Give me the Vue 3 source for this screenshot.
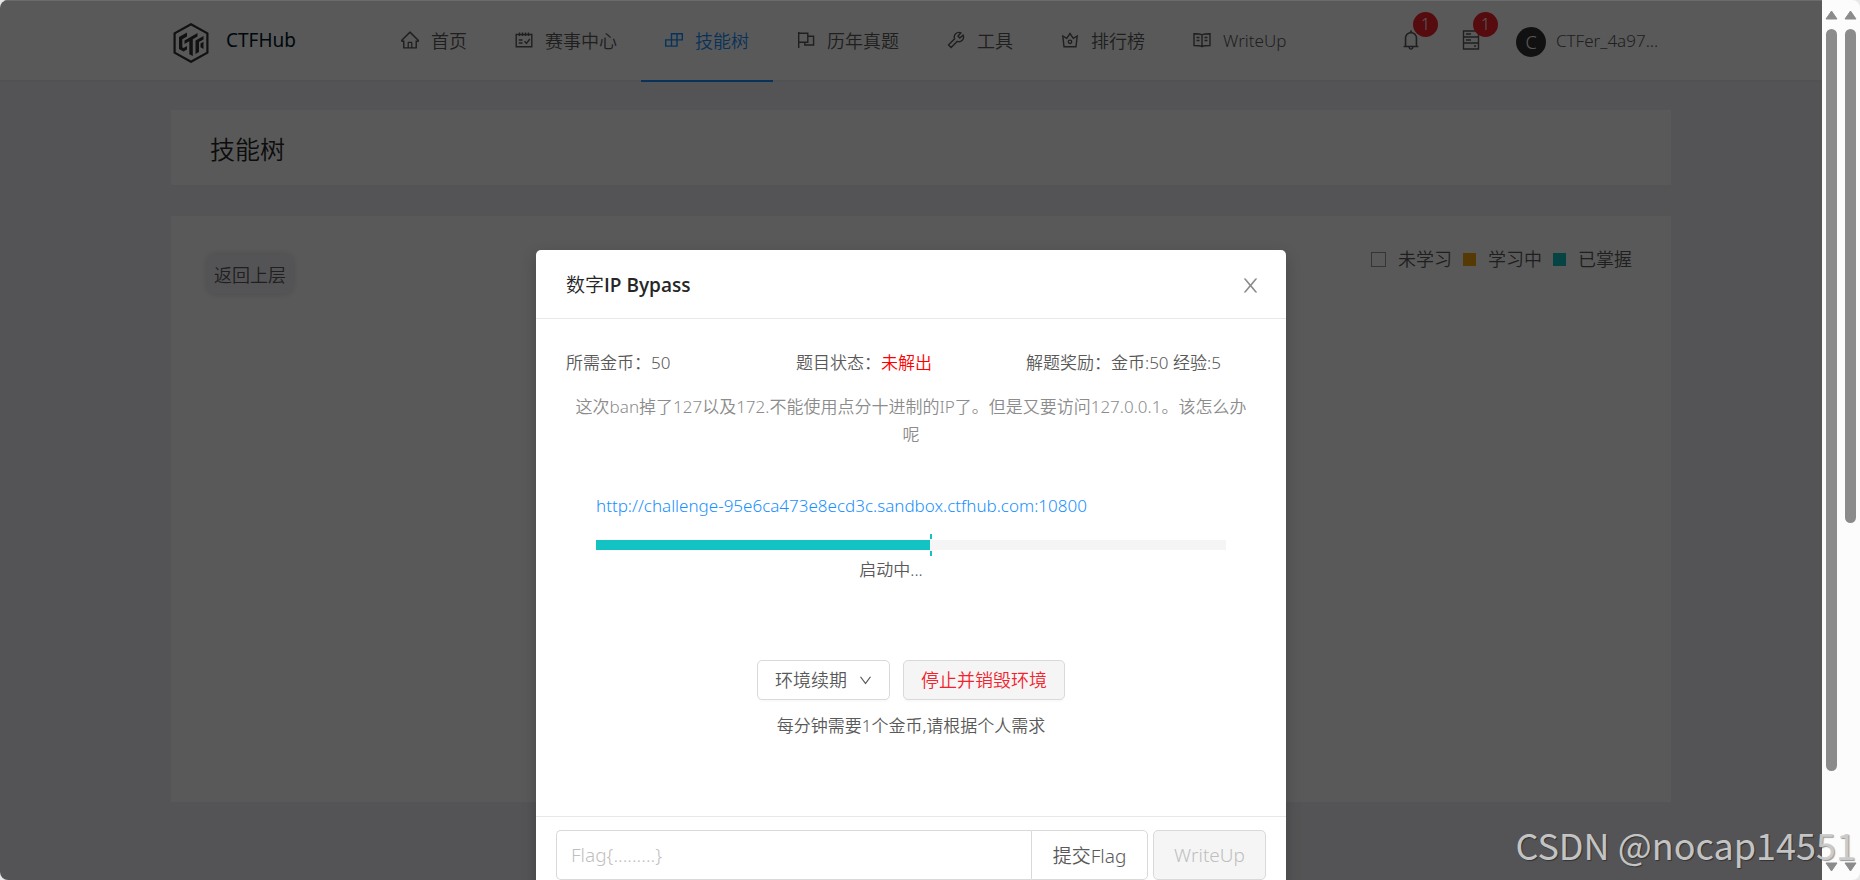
<script setup>
import { ref } from 'vue'

const nav = [
  { id: 'home', label: '首页' },
  { id: 'event', label: '赛事中心' },
  { id: 'skill', label: '技能树', active: true },
  { id: 'flag', label: '历年真题' },
  { id: 'tool', label: '工具' },
  { id: 'crown', label: '排行榜' },
  { id: 'book', label: 'WriteUp' },
]
const legend = [
  { id: 'todo', label: '未学习' },
  { id: 'doing', label: '学习中' },
  { id: 'done', label: '已掌握' },
]
const progress = 53
const flag = ref('')
</script>

<template>
  <div class="screen">
    <div class="page">
      <header class="topbar">
        <div class="container bar">
          <a class="brand" href="#">
            <svg class="logo" viewBox="0 0 36 40" aria-hidden="true">
              <path d="M18 1.2 34.4 10.4V29.6L18 38.8 1.6 29.6V10.4Z" fill="none" stroke="#333" stroke-width="2.2" />
              <path d="M14 9.5 6 14V26L10.5 28.5 14 26.5V23L10.5 25 9.3 24.2V16.2L14 13.4Z" fill="#333" />
              <path d="M11.5 17.5 24.5 10V13.5L19.8 16.2V33L16.3 31.2V18.2L11.5 21Z" fill="#333" />
              <path d="M22.5 17.5 30.5 13V16.5L26 19V29L22.5 31Z" fill="#333" />
              <path d="M27.5 20.5 30.5 18.8V26L27.5 24.2Z" fill="#333" />
            </svg>
            <span>CTFHub</span>
          </a>
          <nav class="menu">
            <a v-for="n in nav" :key="n.id" href="#" class="item" :class="{ active: n.active }">
              <svg v-if="n.id === 'home'" class="ico" viewBox="64 64 896 896" fill="currentColor"><path d="M946.5 505L560.1 118.8l-25.9-25.9a31.5 31.5 0 0 0-44.4 0L77.5 505a63.9 63.9 0 0 0-18.8 46c.4 35.2 29.7 63.3 64.9 63.3h42.5V940h691.8V614.3h43.4c17.1 0 33.2-6.7 45.3-18.8a63.6 63.6 0 0 0 18.7-45.3c0-17-6.7-33.1-18.8-45.2zM568 868H456V664h112v204zm217.9-325.7V868H632V640c0-22.1-17.9-40-40-40H432c-22.1 0-40 17.9-40 40v228H238.1V542.3h-96l370-369.7 23.1 23.1L882 542.3h-96.1z" /></svg>
              <svg v-else class="ico line" viewBox="0 0 18 18">
                <path v-if="n.id === 'event'" d="M1.2 3.5H16.8V15.8H1.2ZM4.5 1.5V5M7.5 1.5V5M10.5 1.5V5M13.5 1.5V5M3.8 9H7.5M3.8 12H7.5M9.5 10.2 11.5 12.5 14.8 8" />
                <path v-if="n.id === 'skill'" d="M6.5 2.7H17.3V8.9H6.5ZM.7 8.9H12V15.1H.7ZM12 2.7V8.9M6.5 8.9V15.1" />
                <path v-if="n.id === 'flag'" d="M1.7 1V17M1.7 2.2H10.8V11.2H1.7M10.8 5.2H16.6V14H7.8V11.2" />
                <path v-if="n.id === 'tool'" d="M11 5.2 13.8 1.9A4.6 4.6 0 0 0 7.6 7.8L1.5 13.9 4.1 16.5 10.2 10.4A4.6 4.6 0 0 0 16.1 4.2L12.8 7Z" />
                <template v-if="n.id === 'crown'"><path d="M1.8 5 3 15.8H15L16.2 5 12.3 7.4 9 2.5 5.7 7.4Z" /><circle cx="9" cy="10.8" r="1.7" /></template>
                <path v-if="n.id === 'book'" d="M9 4C7 2.8 4.5 2.8 1 2.8V14.5C4.5 14.5 7 14.5 9 15.7 11 14.5 13.5 14.5 17 14.5V2.8C13.5 2.8 11 2.8 9 4ZM9 4V15.7M3.5 6.5H6.5M3.5 9.5H6.5M11.5 6.5H14.5M11.5 9.5H14.5" />
              </svg>
              <span>{{ n.label }}</span>
            </a>
          </nav>
          <div class="user">
            <button class="notice" aria-label="消息">
              <svg viewBox="64 64 896 896" fill="currentColor"><path d="M816 768h-24V428c0-141.1-104.3-257.8-240-277.2V112c0-22.1-17.9-40-40-40s-40 17.9-40 40v38.8C336.3 170.2 232 286.9 232 428v340h-24c-17.7 0-32 14.3-32 32v32c0 4.4 3.6 8 8 8h216c0 61.8 50.2 112 112 112s112-50.2 112-112h216c4.4 0 8-3.6 8-8v-32c0-17.7-14.3-32-32-32zM512 888c-26.5 0-48-21.5-48-48h96c0 26.5-21.5 48-48 48zM304 768V428c0-55.6 21.6-107.8 60.9-147.1S456.4 220 512 220c55.6 0 107.8 21.6 147.1 60.9S720 372.4 720 428v340H304z" /></svg>
              <span class="badge">1</span>
            </button>
            <button class="notice" aria-label="环境">
              <svg viewBox="0 0 20 20" class="line"><path d="M2.5 1H17.5V19H2.5ZM2.5 7H17.5M2.5 13H17.5M5 4H10M5 10H10M13 16H15" /></svg>
              <span class="badge">1</span>
            </button>
            <a class="account" href="#"><span class="avatar">C</span><span>CTFer_4a97...</span></a>
          </div>
        </div>
      </header>

      <main class="container">
        <section class="card heading"><h1>技能树</h1></section>
        <section class="card tree">
          <button class="back">返回上层</button>
          <ul class="legend">
            <li v-for="l in legend" :key="l.id"><i :class="l.id"></i>{{ l.label }}</li>
          </ul>
        </section>
      </main>

      <div class="mask">
        <div class="modal" role="dialog" aria-labelledby="dialog-title">
          <div class="modal-head">
            <h2 id="dialog-title"><span>数字</span>IP Bypass</h2>
            <button class="close" aria-label="关闭">
              <svg viewBox="64 64 896 896" fill="currentColor"><path d="M563.8 512l262.5-312.9c4.4-5.2.7-13.1-6.1-13.1h-79.8c-4.7 0-9.2 2.1-12.3 5.7L511.6 449.8 295.1 191.7c-3-3.6-7.5-5.7-12.3-5.7H203c-6.8 0-10.5 7.9-6.1 13.1L459.4 512 196.9 824.9A7.95 7.95 0 0 0 203 838h79.8c4.7 0 9.2-2.1 12.3-5.7l216.5-258.1 216.5 258.1c3 3.6 7.5 5.7 12.3 5.7h79.8c6.8 0 10.5-7.9 6.1-13.1L563.8 512z" /></svg>
            </button>
          </div>
          <div class="modal-body">
            <div class="facts">
              <span>所需金币：50</span>
              <span>题目状态：<b>未解出</b></span>
              <span>解题奖励：金币:50 经验:5</span>
            </div>
            <p class="desc">这次ban掉了127以及172.不能使用点分十进制的IP了。但是又要访问127.0.0.1。该怎么办呢</p>
            <div class="env">
              <a class="url" href="#">http://challenge-95e6ca473e8ecd3c.sandbox.ctfhub.com:10800</a>
              <div class="track" role="progressbar" :aria-valuenow="progress" aria-label="启动进度">
                <div class="fill" :style="{ width: progress + '%' }"></div>
              </div>
              <p class="state">启动中...</p>
            </div>
            <div class="actions">
              <button class="btn">
                环境续期
                <svg viewBox="64 64 896 896" fill="currentColor"><path d="M884 256h-75c-5.1 0-9.9 2.5-12.9 6.6L512 654.2 227.9 262.6c-3-4.1-7.8-6.6-12.9-6.6h-75c-6.5 0-10.3 7.4-6.5 12.7l352.6 486.1c12.8 17.6 39 17.6 51.7 0l352.6-486.1c3.9-5.3.1-12.7-6.4-12.7z" /></svg>
              </button>
              <button class="btn danger">停止并销毁环境</button>
            </div>
            <p class="hint">每分钟需要1个金币,请根据个人需求</p>
          </div>
          <div class="modal-foot">
            <input v-model="flag" type="text" placeholder="Flag{.........}" aria-label="Flag" />
            <button class="submit">提交Flag</button>
            <button class="writeup" disabled>WriteUp</button>
          </div>
        </div>
      </div>
    </div>

    <div v-for="s in ['inner', 'outer']" :key="s" class="scroll" :class="s">
      <svg viewBox="0 0 13 10"><path d="M6.5 1 12 9H1Z" /></svg>
      <div class="rail"><div class="thumb"></div></div>
      <svg viewBox="0 0 13 10"><path d="M6.5 9 12 1H1Z" /></svg>
    </div>
    <div class="watermark">CSDN @nocap14551</div>
  </div>
</template>

<style>
body {
  background: #e8e8e8;
}
</style>

<style scoped>
* {
  box-sizing: border-box;
}
.screen {
  position: relative;
  display: flex;
  height: 100vh;
  overflow: hidden;
  border-radius: 8px;
  background: #fcfcfc;
  font-family: "Noto Sans", "Noto Sans CJK SC", sans-serif;
  font-size: 17px;
  font-weight: 350;
  color: #595959;
}
button,
input {
  margin: 0;
  padding: 0;
  border: 0;
  background: none;
  font: inherit;
  color: inherit;
}
a {
  color: inherit;
  text-decoration: none;
}
h1,
h2,
p,
ul {
  margin: 0;
  padding: 0;
  font-weight: inherit;
}
.page {
  position: relative;
  flex: 1;
  overflow: hidden;
  background: #f0f0f5;
}
.container {
  margin: 0 151px 0 171px;
}
.topbar {
  background: #fff;
  border-bottom: 2px solid #e8ecf0;
}
.bar {
  display: flex;
  height: 80px;
}
.brand {
  display: flex;
  align-items: center;
  gap: 17px;
  width: 206px;
  padding-left: 2px;
  font-size: 19px;
  font-weight: 400;
  color: #001529;
}
.logo {
  width: 36px;
  height: 40px;
  margin-top: 6px;
}
.menu {
  display: flex;
  flex: 1;
}
.item {
  display: flex;
  align-items: center;
  gap: 12px;
  height: 82px;
  padding: 0 24px;
  border-bottom: 2px solid transparent;
  font-size: 18px;
  white-space: nowrap;
}
.item:last-child {
  font-size: 17px;
}
.item.active {
  color: #1890ff;
  border-color: #1890ff;
}
.ico {
  width: 18px;
  height: 18px;
}
.line {
  fill: none;
  stroke: currentColor;
  stroke-width: 1.4;
}
.user {
  display: flex;
  align-items: center;
  width: 270px;
  gap: 40px;
}
.notice {
  position: relative;
  width: 20px;
  height: 20px;
}
.notice svg {
  display: block;
  width: 20px;
  height: 20px;
}
.badge {
  position: absolute;
  left: 12px;
  top: -18px;
  width: 25px;
  height: 25px;
  border-radius: 50%;
  background: #f5222d;
  color: #fff;
  font-size: 16px;
  line-height: 25px;
  text-align: center;
}
.account {
  display: flex;
  align-items: center;
  gap: 10px;
  margin-left: -5px;
}
.avatar {
  width: 30px;
  height: 30px;
  margin-top: 4px;
  border-radius: 50%;
  background: #333;
  color: #fff;
  font-size: 18px;
  line-height: 30px;
  text-align: center;
}
.card {
  background: #fff;
}
.heading {
  margin-top: 28px;
  padding: 3px 39px 0;
}
h1 {
  font-size: 25px;
  line-height: 72px;
  color: #262626;
}
.tree {
  display: flex;
  justify-content: space-between;
  align-items: flex-start;
  height: 586px;
  margin-top: 31px;
  padding: 30px 39px 0 36px;
  font-size: 18px;
}
.back {
  height: 40px;
  margin-top: 8px;
  padding: 0 7px;
  border-radius: 8px;
  background: #f0f0f5;
  box-shadow: 0 0 6px #d8d8dc;
}
.legend {
  display: flex;
  gap: 11px;
  list-style: none;
  line-height: 26px;
}
.legend li {
  display: flex;
  align-items: center;
  gap: 12px;
}
.legend i {
  width: 13px;
  height: 13px;
}
.legend .todo {
  width: 15px;
  height: 15px;
  border: 1px solid #999;
}
.legend .doing {
  background: #f5a60f;
}
.legend .done {
  background: #13c2c2;
}
.mask {
  position: absolute;
  inset: 0;
  display: flex;
  justify-content: center;
  align-items: flex-start;
  padding-top: 249px;
  background: rgba(0, 0, 0, 0.65);
  border-top: 1px solid #6c6c6c;
}
.modal {
  width: 750px;
  border-radius: 5px;
  background: #fff;
  box-shadow: 0 5px 15px rgba(0, 0, 0, 0.2);
}
.modal-head {
  display: flex;
  justify-content: space-between;
  align-items: center;
  height: 69px;
  padding: 2px 26px 0 30px;
  border-bottom: 1px solid #e8e8e8;
}
h2 {
  font-family: "Open Sans", "Noto Sans CJK SC", sans-serif;
  font-size: 19px;
  font-weight: 600;
  color: #262626;
  line-height: 30px;
}
h2 span {
  font-weight: 350;
}
.close {
  width: 19px;
  height: 19px;
  color: #8c8c8c;
}
.close svg {
  display: block;
  width: 19px;
}
.modal-body {
  height: 497px;
  padding: 30px;
  line-height: 28px;
}
.facts {
  display: grid;
  grid-template-columns: repeat(3, 1fr);
}
.facts b {
  font-weight: inherit;
  color: #f00;
}
.desc {
  margin-top: 16px;
  padding: 0 4px;
  text-align: center;
  color: #8c8c8c;
}
.env {
  padding: 43px 30px 0;
}
.url {
  display: block;
  color: #1890ff;
}
.track {
  height: 10px;
  margin-top: 20px;
  background: #f5f5f5;
}
.fill {
  position: relative;
  height: 10px;
  background: #13c2c2;
}
.fill::before,
.fill::after {
  content: "";
  position: absolute;
  right: -2px;
  width: 2px;
  height: 5px;
  background: #13c2c2;
}
.fill::before {
  top: -6px;
}
.fill::after {
  bottom: -6px;
}
.state {
  margin-top: 6px;
  padding-right: 40px;
  text-align: center;
}
.actions {
  display: flex;
  justify-content: center;
  gap: 13px;
  margin-top: 76px;
}
.btn {
  display: flex;
  align-items: center;
  gap: 12px;
  height: 40px;
  padding: 0 17px;
  border: 1px solid #d9d9d9;
  border-radius: 5px;
  font-size: 18px;
  box-shadow: 0 2px 0 rgba(0, 0, 0, 0.02);
}
.btn svg {
  width: 13px;
}
.danger {
  background: #f5f5f5;
  color: #f5222d;
}
.hint {
  margin-top: 12px;
  text-align: center;
}
.modal-foot {
  display: flex;
  padding: 13px 20px;
  border-top: 1px solid #e8e8e8;
  font-size: 19px;
}
.modal-foot input {
  flex: 1;
  height: 50px;
  padding: 0 14px;
  border: 1px solid #d9d9d9;
  border-right: 0;
  border-radius: 5px 0 0 5px;
}
.modal-foot input::placeholder {
  color: #bfbfbf;
}
.submit {
  width: 117px;
  border: 1px solid #d9d9d9;
  border-radius: 0 5px 5px 0;
}
.writeup {
  width: 113px;
  margin-left: 5px;
  border: 1px solid #d9d9d9;
  border-radius: 5px;
  background: #f5f5f5;
  color: #bfbfbf;
}
.scroll {
  display: flex;
  flex-direction: column;
  align-items: center;
  gap: 9px;
  width: 19px;
  padding: 10px 0 8px;
}
.scroll svg {
  flex: none;
  width: 13px;
  height: 10px;
  fill: #8b8b8b;
  stroke: #8b8b8b;
  stroke-linejoin: round;
}
.rail {
  flex: 1;
}
.thumb {
  width: 11px;
  height: 90%;
  border-radius: 6px;
  background: #8b8b8b;
}
.outer .thumb {
  height: 60%;
}
.watermark {
  position: absolute;
  right: 4px;
  bottom: 11px;
  font-family: "Noto Sans CJK SC", sans-serif;
  font-size: 36px;
  font-weight: 400;
  line-height: 50px;
  color: rgba(205, 205, 205, 0.95);
  text-shadow: 1px 1px 1px rgba(0, 0, 0, 0.4);
}
</style>
